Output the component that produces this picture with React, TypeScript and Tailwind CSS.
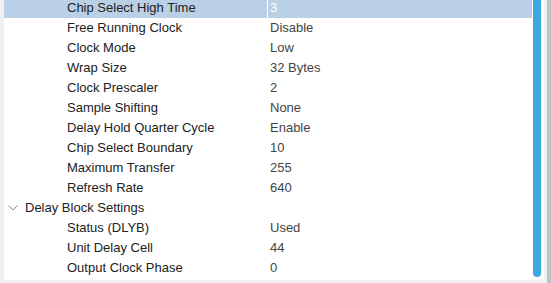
const rows: { label: string; value?: string; group?: boolean; selected?: boolean }[] = [
  { label: "Chip Select High Time", value: "3", selected: true },
  { label: "Free Running Clock", value: "Disable" },
  { label: "Clock Mode", value: "Low" },
  { label: "Wrap Size", value: "32 Bytes" },
  { label: "Clock Prescaler", value: "2" },
  { label: "Sample Shifting", value: "None" },
  { label: "Delay Hold Quarter Cycle", value: "Enable" },
  { label: "Chip Select Boundary", value: "10" },
  { label: "Maximum Transfer", value: "255" },
  { label: "Refresh Rate", value: "640" },
  { label: "Delay Block Settings", group: true },
  { label: "Status (DLYB)", value: "Used" },
  { label: "Unit Delay Cell", value: "44" },
  { label: "Output Clock Phase", value: "0" },
];

function Caret() {
  return (
    <svg width="10" height="6" viewBox="0 0 10 6" className="shrink-0">
      <path d="M0.5 0.5 L5 5 L9.5 0.5" fill="none" stroke="#888" strokeWidth="1" />
    </svg>
  );
}

export default function App() {
  return (
    <div
      className="flex h-[283px] w-[551px] overflow-hidden bg-[#f0f0f0] text-[13px]"
      style={{ fontFamily: '"Liberation Sans", Arial, sans-serif' }}
    >
      <div className="ml-[4px] mb-[3px] flex flex-1 bg-white">
        <div className="flex-1 overflow-hidden">
          <div className="-mt-[2px]">
            {rows.map((r) =>
              r.group ? (
                <div key={r.label} className="flex h-[20px] items-center pl-[4px]">
                  <Caret />
                  <span className="ml-[7px] text-[#222]">{r.label}</span>
                </div>
              ) : (
                <div
                  key={r.label}
                  className={`flex h-[20px] items-center ${r.selected ? "bg-[#b9d0e7]" : ""}`}
                >
                  <div className="w-[263px] shrink-0 pl-[63px] text-[#222]">{r.label}</div>
                  <div
                    className={`flex h-full flex-1 items-center pl-[2px] ${
                      r.selected ? "border-l border-white text-white" : "pl-[3px] text-[#444]"
                    }`}
                  >
                    {r.value}
                  </div>
                </div>
              )
            )}
          </div>
        </div>
        <div className="w-[12px] shrink-0 pl-[1px]">
          <div className="h-[277px] w-[8px] rounded-b-[4px] bg-[#3aa9dd]" />
        </div>
      </div>
      <div className="w-[3px] shrink-0 bg-[#f0f0f0]" />
      <div className="w-[4px] shrink-0 bg-[#b9c3c9]" />
    </div>
  );
}
